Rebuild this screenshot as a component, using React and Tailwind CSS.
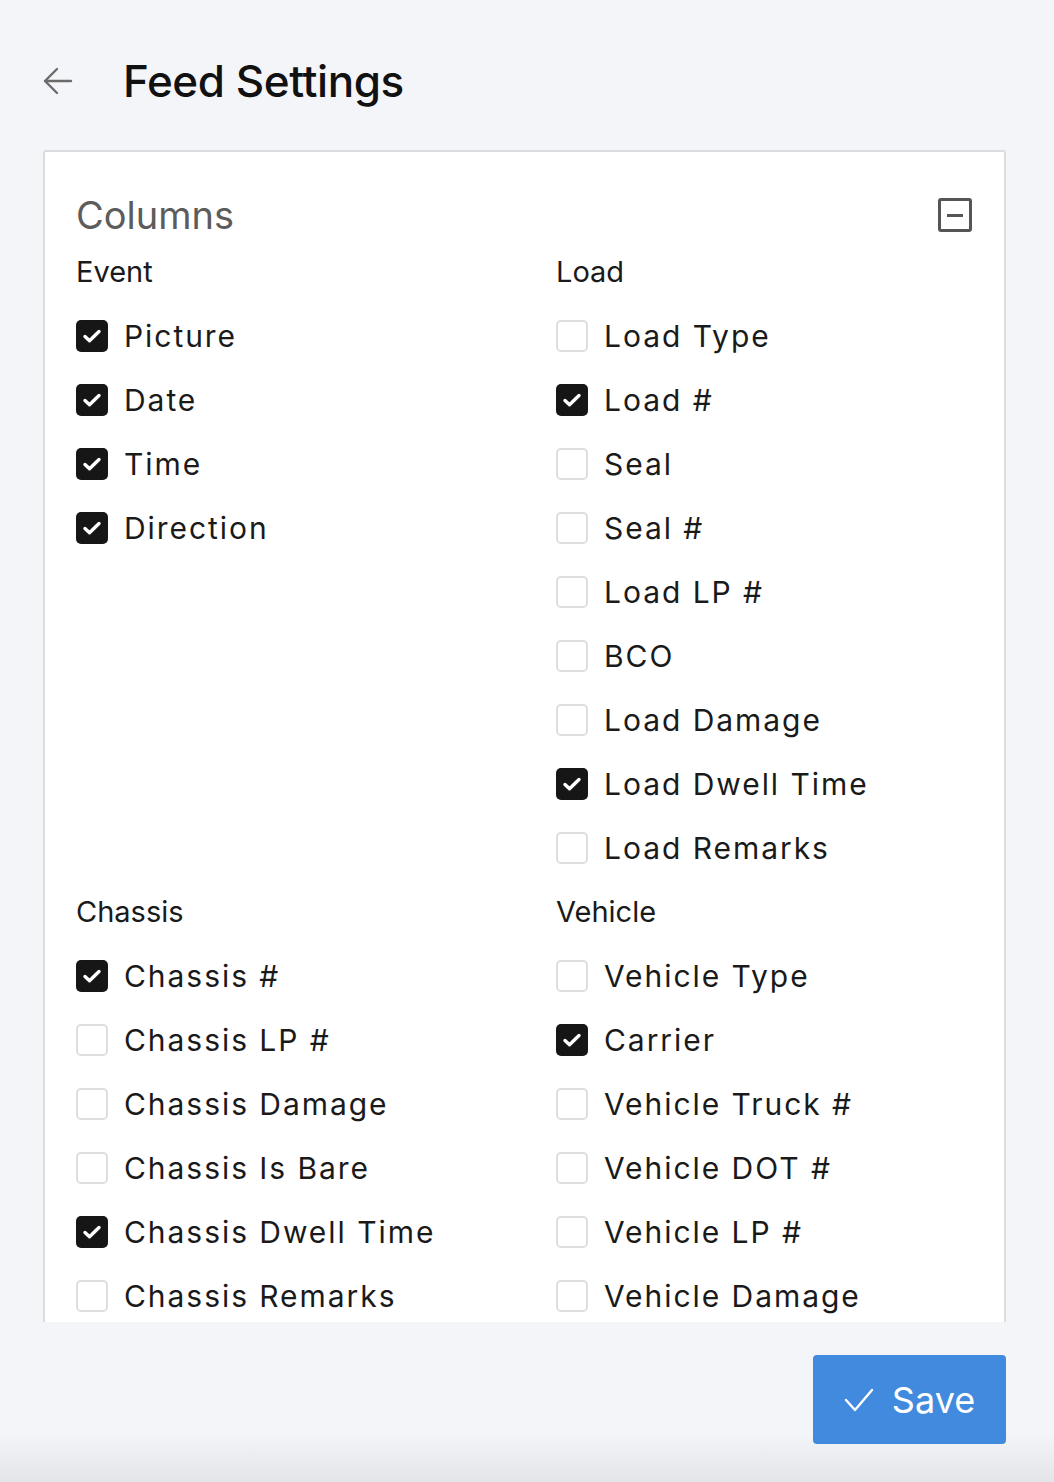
import React from "react";

const sections = [
  [
    {
      title: "Event",
      items: [
        ["Picture", true],
        ["Date", true],
        ["Time", true],
        ["Direction", true],
      ],
    },
    {
      title: "Load",
      items: [
        ["Load Type", false],
        ["Load #", true],
        ["Seal", false],
        ["Seal #", false],
        ["Load LP #", false],
        ["BCO", false],
        ["Load Damage", false],
        ["Load Dwell Time", true],
        ["Load Remarks", false],
      ],
    },
  ],
  [
    {
      title: "Chassis",
      items: [
        ["Chassis #", true],
        ["Chassis LP #", false],
        ["Chassis Damage", false],
        ["Chassis Is Bare", false],
        ["Chassis Dwell Time", true],
        ["Chassis Remarks", false],
      ],
    },
    {
      title: "Vehicle",
      items: [
        ["Vehicle Type", false],
        ["Carrier", true],
        ["Vehicle Truck #", false],
        ["Vehicle DOT #", false],
        ["Vehicle LP #", false],
        ["Vehicle Damage", false],
      ],
    },
  ],
];

function Checkbox({ checked }) {
  if (checked) {
    return (
      <span className="flex h-[32px] w-[32px] shrink-0 items-center justify-center rounded-[5px] bg-[#161616]">
        <svg width="24" height="24" viewBox="0 0 24 24" fill="none">
          <path d="M5 12.5l4.5 4.3L19 7.5" stroke="white" strokeWidth="3.4" strokeLinecap="round" strokeLinejoin="round" />
        </svg>
      </span>
    );
  }
  return <span className="h-[32px] w-[32px] shrink-0 rounded-[5px] border-2 border-[#dedede] bg-white" />;
}

function Group({ title, items }) {
  return (
    <div className="flex flex-col">
      <div className="flex h-16 items-center text-[29px] text-[#1a1a1a]">{title}</div>
      {items.map(([label, checked]) => (
        <div key={label} className="flex h-16 items-center">
          <Checkbox checked={checked} />
          <span className="ml-[16px] text-[30px] tracking-[0.065em] text-[#1a1a1a]">{label}</span>
        </div>
      ))}
    </div>
  );
}

export default function App() {
  return (
    <div
      className="relative flex h-[1482px] w-[1054px] flex-col overflow-hidden bg-[#f4f5f9]"
      style={{ fontFamily: "Inter, 'Noto Sans', sans-serif" }}
    >
      <div className="absolute bottom-0 left-0 h-[50px] w-full bg-gradient-to-b from-[#f4f5f9] to-[#e4e5e9]" />

      <div className="flex h-[150px] items-center pl-[43px] pt-[12px]">
        <svg width="30" height="30" viewBox="0 0 30 30" fill="none">
          <path d="M28 15H2M14 3L2 15l12 12" stroke="#6b6b6b" strokeWidth="2.4" strokeLinecap="round" strokeLinejoin="round" />
        </svg>
        <h1 className="ml-[50px] text-[44px] font-medium tracking-[-0.01em] text-[#111]">Feed Settings</h1>
      </div>

      <div className="ml-[43px] mr-[48px] h-[1172px] overflow-hidden rounded-t-[3px] border-x-2 border-t-2 border-[#dcdcdf] bg-white pl-[31px] pr-[32px] pt-[38px]">
        <div className="flex h-[50px] items-center justify-between">
          <span className="text-[38px] text-[#5c5c5c]">Columns</span>
          <span className="flex h-[34px] w-[34px] items-center justify-center rounded-[3px] border-[3px] border-[#555]">
            <span className="h-[3px] w-[16px] bg-[#555]" />
          </span>
        </div>
        {sections.map((row, i) => (
          <div key={i} className="grid grid-cols-[480px_1fr]">
            {row.map((g) => (
              <Group key={g.title} title={g.title} items={g.items} />
            ))}
          </div>
        ))}
      </div>

      <div className="relative flex flex-1 items-start justify-end pr-[48px] pt-[33px]">
        <button className="flex h-[89px] w-[193px] items-center justify-center gap-[18px] rounded-[4px] bg-[#418ade] text-white">
          <svg width="30" height="26" viewBox="0 0 30 26" fill="none">
            <path d="M2 13l9 10L28 3" stroke="white" strokeWidth="2.4" strokeLinecap="round" strokeLinejoin="round" />
          </svg>
          <span className="text-[36px]">Save</span>
        </button>
      </div>
    </div>
  );
}
